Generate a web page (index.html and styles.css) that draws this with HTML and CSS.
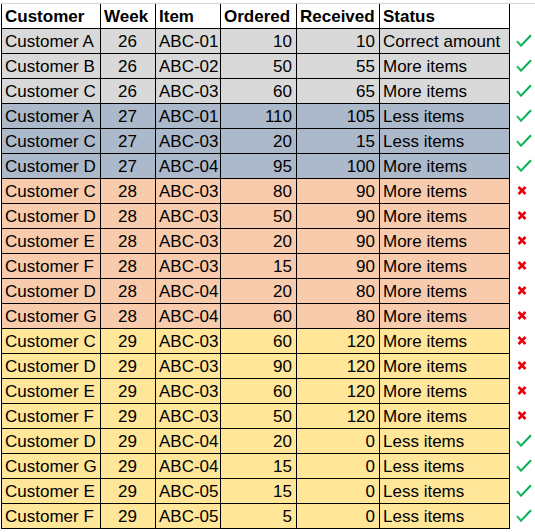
FILE: index.html
```html
<!DOCTYPE html>
<html>
<head>
    <title>Deliveries</title>
    <link rel="stylesheet" href="styles.css">
</head>
<body>
    <svg class="defs" width="0" height="0">
        <symbol id="ok" viewBox="0 0 16 13">
            <path d="M1 7.2 L5 11.6 L15 1.2" fill="none" stroke="#00b050" stroke-width="2" stroke-linejoin="miter"/>
            <path d="M1.6 7.2 L5 10.6" fill="none" stroke="#7fd88a" stroke-width="0.8"/>
        </symbol>
        <symbol id="bad" viewBox="0 0 10 9">
            <path d="M1.5 1 L8.5 8 M8.5 1 L1.5 8" fill="none" stroke="#e8000b" stroke-width="2.6"/>
        </symbol>
    </svg>

    <table class="sheet">
        <colgroup>
            <col class="c-cust"><col class="c-week"><col class="c-item"><col class="c-ord"><col class="c-rec"><col class="c-status"><col class="c-icon">
        </colgroup>
        <tr class="ghost"><td></td><td></td><td></td><td></td><td></td><td></td><td></td></tr>
        <tr class="head">
            <td>Customer</td><td>Week</td><td>Item</td><td>Ordered</td><td>Received</td><td>Status</td><td class="icon"></td>
        </tr>
        <tbody id="rows"></tbody>
    </table>

    <script>
        const data = [
            ['Customer A', 26, 'ABC-01', 10, 10, 'Correct amount', 'wk26'],
            ['Customer B', 26, 'ABC-02', 50, 55, 'More items', 'wk26'],
            ['Customer C', 26, 'ABC-03', 60, 65, 'More items', 'wk26'],
            ['Customer A', 27, 'ABC-01', 110, 105, 'Less items', 'wk27'],
            ['Customer C', 27, 'ABC-03', 20, 15, 'Less items', 'wk27'],
            ['Customer D', 27, 'ABC-04', 95, 100, 'More items', 'wk27'],
            ['Customer C', 28, 'ABC-03', 80, 90, 'More items', 'wk28'],
            ['Customer D', 28, 'ABC-03', 50, 90, 'More items', 'wk28'],
            ['Customer E', 28, 'ABC-03', 20, 90, 'More items', 'wk28'],
            ['Customer F', 28, 'ABC-03', 15, 90, 'More items', 'wk28'],
            ['Customer D', 28, 'ABC-04', 20, 80, 'More items', 'wk28'],
            ['Customer G', 28, 'ABC-04', 60, 80, 'More items', 'wk28'],
            ['Customer C', 29, 'ABC-03', 60, 120, 'More items', 'wk29'],
            ['Customer D', 29, 'ABC-03', 90, 120, 'More items', 'wk29'],
            ['Customer E', 29, 'ABC-03', 60, 120, 'More items', 'wk29'],
            ['Customer F', 29, 'ABC-03', 50, 120, 'More items', 'wk29'],
            ['Customer D', 29, 'ABC-04', 20, 0, 'Less items', 'wk29'],
            ['Customer G', 29, 'ABC-04', 15, 0, 'Less items', 'wk29'],
            ['Customer E', 29, 'ABC-05', 15, 0, 'Less items', 'wk29'],
            ['Customer F', 29, 'ABC-05', 5, 0, 'Less items', 'wk29']
        ];

        // weeks 26, 27 and 29 (from ABC-04 on) are fine, 28 is not
        function isOk(row) {
            return row[1] !== 28 && !(row[1] === 29 && row[4] > 0);
        }

        const body = document.getElementById('rows');
        data.forEach(row => {
            const tr = document.createElement('tr');
            tr.className = row[6];
            const ok = isOk(row);
            tr.innerHTML =
                '<td>' + row[0] + '</td>' +
                '<td class="mid">' + row[1] + '</td>' +
                '<td>' + row[2] + '</td>' +
                '<td class="num">' + row[3] + '</td>' +
                '<td class="num">' + row[4] + '</td>' +
                '<td>' + row[5] + '</td>' +
                '<td class="icon">' + (ok
                    ? '<svg class="ok" width="16" height="13"><use href="#ok"/></svg>'
                    : '<svg class="bad" width="10" height="9"><use href="#bad"/></svg>') +
                '</td>';
            body.appendChild(tr);
        });
    </script>
</body>
</html>
```

FILE: styles.css
```css
body {
    margin: 0;
    background: #fff;
    font-family: "Liberation Sans", Arial, sans-serif;
    font-size: 17px;
    color: #000;
}
.defs {
    position: absolute;
}
.sheet {
    border-collapse: collapse;
    table-layout: fixed;
    margin-top: 2px;
    margin-left: 1px;
    width: 534px;
}
.c-cust { width: 99px; }
.c-week { width: 55px; }
.c-item { width: 65px; }
.c-ord { width: 76px; }
.c-rec { width: 83px; }
.c-status { width: 130px; }
.c-icon { width: 26px; }

.sheet td {
    border: 1px solid #000;
    padding: 2px 4px 0 3px;
    line-height: 22px;
    height: 22px;
    white-space: nowrap;
    overflow: hidden;
    vertical-align: top;
}
.sheet tr.ghost td {
    height: 1px;
    padding: 0;
    line-height: 0;
    font-size: 0;
    border: none;
    border-right: 1px solid #d4d4d4;
    border-bottom: 1px solid #d4d4d4;
}
.sheet tr.head td {
    font-weight: bold;
    background: #fff;
}
.sheet td.icon {
    border: none;
    border-left: 1px solid #000;
    border-right: 1px solid #d4d4d4;
    background: #fff;
    padding: 0 0 0 6px;
    line-height: 0;
}
.sheet tr.head td.icon {
    border-top: 1px solid #d4d4d4;
}
.icon .ok {
    display: block;
    margin-top: 5px;
}
.icon .bad {
    display: block;
    margin-top: 7px;
    margin-left: 1px;
}
.mid { text-align: center; }
.num { text-align: right; }

.wk26 td { background: #d9d9d9; }
.wk27 td { background: #acb9ca; }
.wk28 td { background: #f8cbad; }
.wk29 td { background: #ffe699; }
```
